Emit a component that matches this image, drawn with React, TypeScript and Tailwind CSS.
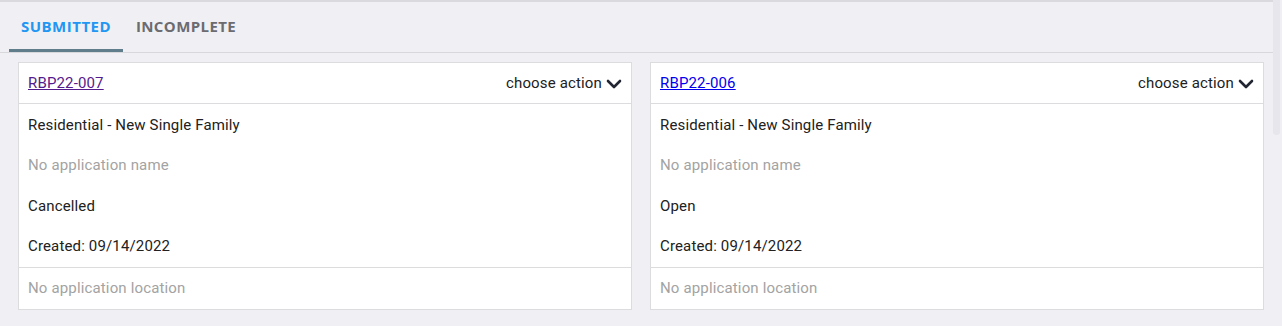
import React from 'react';

interface Permit {
  id: string;
  visited: boolean;
  type: string;
  status: string;
  created: string;
}

const permits: Permit[] = [
  { id: 'RBP22-007', visited: true, type: 'Residential - New Single Family', status: 'Cancelled', created: '09/14/2022' },
  { id: 'RBP22-006', visited: false, type: 'Residential - New Single Family', status: 'Open', created: '09/14/2022' },
];

const Chevron = () => (
  <svg width="16" height="10" viewBox="0 0 16 10" className="ml-[4px] mt-[2px]">
    <polyline points="2,2 8,8 14,2" fill="none" stroke="#222633" strokeWidth="2.6" strokeLinecap="round" strokeLinejoin="round" />
  </svg>
);

const PermitCard: React.FC<{ permit: Permit }> = ({ permit }) => (
  <div className="bg-white border border-[#dcdcdf] tracking-[0.15px]">
    <div className="h-[41px] flex items-center justify-between pl-[9px] pr-[9px] border-b border-[#dcdcdf]">
      <a
        href="#"
        className={`underline text-[15px] ${permit.visited ? 'text-[#551a8b] decoration-[#551a8b]' : 'text-[#0000ee] decoration-[#0000ee]'}`}
      >
        {permit.id}
      </a>
      <div className="flex items-center text-[15px] text-[#212121]">
        choose action
        <Chevron />
      </div>
    </div>
    <div className="px-[9px] pt-[1px] text-[15px]">
      <div className="h-[40px] flex items-center text-[#212121]">{permit.type}</div>
      <div className="h-[41px] flex items-center text-[#a3a3a3]">No application name</div>
      <div className="h-[40px] flex items-center text-[#212121]">{permit.status}</div>
      <div className="h-[41px] flex items-center text-[#212121]">Created: {permit.created}</div>
    </div>
    <div className="h-[42px] flex items-center px-[9px] border-t border-[#dcdcdf] text-[15px] text-[#a3a3a3]">
      No application location
    </div>
  </div>
);

export default function App() {
  return (
    <div className="w-[1282px] h-[326px] bg-[#f0f0f4] flex overflow-hidden" style={{ fontFamily: 'Roboto, "Liberation Sans", sans-serif' }}>
      <div className="flex-1 flex flex-col border-t-2 border-[#dadade]">
        <div className="h-[51px] flex items-end px-[9px] border-b border-[#d8d8dc]">
          <div className="w-[114px] h-full flex items-center justify-center border-b-[3px] border-[#607d8b] pt-[2px]">
            <span className="text-[15px] font-bold tracking-[0.5px] text-[#2196f3]" style={{ fontFamily: '"Open Sans", sans-serif' }}>
              SUBMITTED
            </span>
          </div>
          <div className="w-[126px] h-full flex items-center justify-center pb-[1px]">
            <span className="text-[15px] font-bold tracking-[0.4px] text-[#6b6b70]" style={{ fontFamily: '"Open Sans", sans-serif' }}>
              INCOMPLETE
            </span>
          </div>
        </div>
        <div className="grid grid-cols-2 pl-[9px] pt-[9px]">
          {permits.map((p) => (
            <div key={p.id} className="px-[9px]">
              <PermitCard permit={p} />
            </div>
          ))}
        </div>
      </div>
      <div className="w-[9px] flex flex-col">
        <div className="w-[7px] h-[135px] bg-[#e6e6ec] rounded-b-[3px]" />
      </div>
    </div>
  );
}
